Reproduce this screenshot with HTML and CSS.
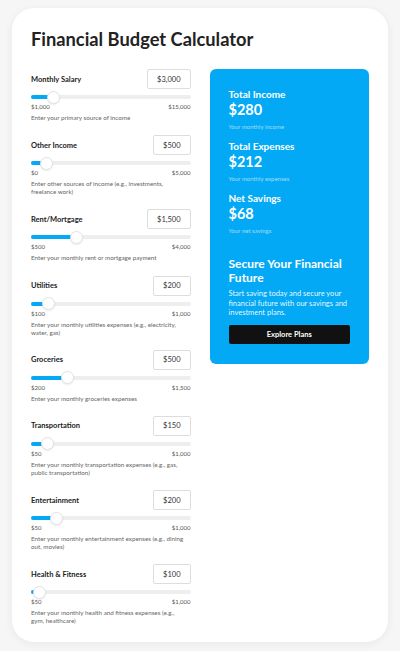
FILE: index.html
```html
<!DOCTYPE html>
<html lang="en">
<head>
    <meta charset="UTF-8">
    <meta name="viewport" content="width=device-width, initial-scale=1.0">
    <title>Financial Budget Calculator</title>
    <link rel="stylesheet" href="styles.css">
</head>
<body>
    <div class="card">
        <h1 class="title">Financial Budget Calculator</h1>

        <div class="layout">
            <div class="fields">
                <div class="field">
                    <div class="field-head">
                        <label class="field-label">Monthly Salary</label>
                        <span class="field-value">$3,000</span>
                    </div>
                    <div class="slider">
                        <div class="slider-fill" style="width: 14.29%"></div>
                        <div class="slider-thumb" style="left: 14.29%"></div>
                    </div>
                    <div class="slider-range"><span>$1,000</span><span>$15,000</span></div>
                    <p class="hint">Enter your primary source of income</p>
                </div>

                <div class="field">
                    <div class="field-head">
                        <label class="field-label">Other Income</label>
                        <span class="field-value">$500</span>
                    </div>
                    <div class="slider">
                        <div class="slider-fill" style="width: 10%"></div>
                        <div class="slider-thumb" style="left: 10%"></div>
                    </div>
                    <div class="slider-range"><span>$0</span><span>$5,000</span></div>
                    <p class="hint">Enter other sources of income (e.g., investments, freelance work)</p>
                </div>

                <div class="field">
                    <div class="field-head">
                        <label class="field-label">Rent/Mortgage</label>
                        <span class="field-value">$1,500</span>
                    </div>
                    <div class="slider">
                        <div class="slider-fill" style="width: 28.57%"></div>
                        <div class="slider-thumb" style="left: 28.57%"></div>
                    </div>
                    <div class="slider-range"><span>$500</span><span>$4,000</span></div>
                    <p class="hint">Enter your monthly rent or mortgage payment</p>
                </div>

                <div class="field">
                    <div class="field-head">
                        <label class="field-label">Utilities</label>
                        <span class="field-value">$200</span>
                    </div>
                    <div class="slider">
                        <div class="slider-fill" style="width: 11.11%"></div>
                        <div class="slider-thumb" style="left: 11.11%"></div>
                    </div>
                    <div class="slider-range"><span>$100</span><span>$1,000</span></div>
                    <p class="hint">Enter your monthly utilities expenses (e.g., electricity, water, gas)</p>
                </div>

                <div class="field">
                    <div class="field-head">
                        <label class="field-label">Groceries</label>
                        <span class="field-value">$500</span>
                    </div>
                    <div class="slider">
                        <div class="slider-fill" style="width: 23.08%"></div>
                        <div class="slider-thumb" style="left: 23.08%"></div>
                    </div>
                    <div class="slider-range"><span>$200</span><span>$1,500</span></div>
                    <p class="hint">Enter your monthly groceries expenses</p>
                </div>

                <div class="field">
                    <div class="field-head">
                        <label class="field-label">Transportation</label>
                        <span class="field-value">$150</span>
                    </div>
                    <div class="slider">
                        <div class="slider-fill" style="width: 10.53%"></div>
                        <div class="slider-thumb" style="left: 10.53%"></div>
                    </div>
                    <div class="slider-range"><span>$50</span><span>$1,000</span></div>
                    <p class="hint">Enter your monthly transportation expenses (e.g., gas, public transportation)</p>
                </div>

                <div class="field">
                    <div class="field-head">
                        <label class="field-label">Entertainment</label>
                        <span class="field-value">$200</span>
                    </div>
                    <div class="slider">
                        <div class="slider-fill" style="width: 15.79%"></div>
                        <div class="slider-thumb" style="left: 15.79%"></div>
                    </div>
                    <div class="slider-range"><span>$50</span><span>$1,000</span></div>
                    <p class="hint">Enter your monthly entertainment expenses (e.g., dining out, movies)</p>
                </div>

                <div class="field">
                    <div class="field-head">
                        <label class="field-label">Health &amp; Fitness</label>
                        <span class="field-value">$100</span>
                    </div>
                    <div class="slider">
                        <div class="slider-fill" style="width: 5.26%"></div>
                        <div class="slider-thumb" style="left: 5.26%"></div>
                    </div>
                    <div class="slider-range"><span>$50</span><span>$1,000</span></div>
                    <p class="hint">Enter your monthly health and fitness expenses (e.g., gym, healthcare)</p>
                </div>
            </div>

            <div class="summary">
                <div class="stat">
                    <h3 class="stat-label">Total Income</h3>
                    <div class="stat-value">$280</div>
                    <p class="stat-note">Your monthly income</p>
                </div>
                <div class="stat">
                    <h3 class="stat-label">Total Expenses</h3>
                    <div class="stat-value">$212</div>
                    <p class="stat-note">Your monthly expenses</p>
                </div>
                <div class="stat">
                    <h3 class="stat-label">Net Savings</h3>
                    <div class="stat-value">$68</div>
                    <p class="stat-note">Your net savings</p>
                </div>

                <h2 class="promo-title">Secure Your Financial Future</h2>
                <p class="promo-text">Start saving today and secure your financial future with our savings and investment plans.</p>
                <button class="promo-button">Explore Plans</button>
            </div>
        </div>
    </div>
</body>
</html>
```

FILE: styles.css
```css
body {
    font-family: 'Lato', 'Open Sans', sans-serif;
    background-color: #f6f6f6;
    color: #222;
    margin: 0;
    padding: 8px 12px 10px;
}

.card {
    background-color: #fff;
    border-radius: 22px;
    box-shadow: 0 2px 10px rgba(0, 0, 0, 0.06);
    padding: 20px 19px 17px;
}

.title {
    font-size: 18.3px;
    line-height: 23px;
    font-weight: 700;
    margin: 0 0 18px;
}

.layout {
    display: grid;
    grid-template-columns: 1fr 1fr;
    gap: 19px;
    align-items: start;
}

.field {
    margin-bottom: 13.2px;
}

.field:last-child {
    margin-bottom: 0;
}

.field-head {
    display: flex;
    justify-content: space-between;
    align-items: center;
    height: 20px;
}

.field-label {
    font-size: 7.5px;
    font-weight: 700;
    color: #222;
}

.field-value {
    display: inline-flex;
    align-items: center;
    height: 20px;
    box-sizing: border-box;
    padding: 0 9px;
    border: 1px solid #ddd;
    border-radius: 2px;
    font-size: 7.5px;
    color: #333;
}

.slider {
    position: relative;
    height: 4px;
    margin-top: 6px;
    background-color: #eee;
    border-radius: 2px;
}

.slider-fill {
    height: 100%;
    background-color: #03a9f4;
    border-radius: 2px;
}

.slider-thumb {
    position: absolute;
    top: 50%;
    width: 11px;
    height: 11px;
    margin: -6.5px 0 0 -6.5px;
    background-color: #fff;
    border: 1px solid #e2e2e2;
    border-radius: 50%;
    box-shadow: 0 1px 2px rgba(0, 0, 0, 0.08);
}

.slider-range {
    display: flex;
    justify-content: space-between;
    margin-top: 4px;
    font-size: 6px;
    line-height: 8px;
    color: #555;
}

.hint {
    margin: 3px 0 0;
    padding-right: 3px;
    font-size: 6.25px;
    line-height: 8px;
    color: #666;
}

.summary {
    background-color: #03a9f4;
    color: #fff;
    border-radius: 6px;
    padding: 19px 19px 20px;
}

.stat {
    margin-bottom: 9px;
}

.stat-label {
    margin: 0;
    font-size: 10px;
    line-height: 12px;
    font-weight: 700;
}

.stat-value {
    font-size: 14.5px;
    line-height: 19px;
    font-weight: 700;
}

.stat-note {
    margin: 4px 0 0;
    font-size: 6px;
    line-height: 8px;
    color: rgba(255, 255, 255, 0.6);
}

.promo-title {
    margin: 22px 0 0;
    font-size: 12px;
    line-height: 13.5px;
    font-weight: 700;
}

.promo-text {
    margin: 5px 0 0;
    font-size: 7.5px;
    line-height: 9.7px;
    color: rgba(255, 255, 255, 0.92);
}

.promo-button {
    display: block;
    width: 100%;
    height: 19px;
    margin-top: 7px;
    padding: 0;
    background-color: #111;
    color: #fff;
    border: none;
    border-radius: 2px;
    font-family: inherit;
    font-size: 7.5px;
    font-weight: 700;
    cursor: pointer;
}
```
